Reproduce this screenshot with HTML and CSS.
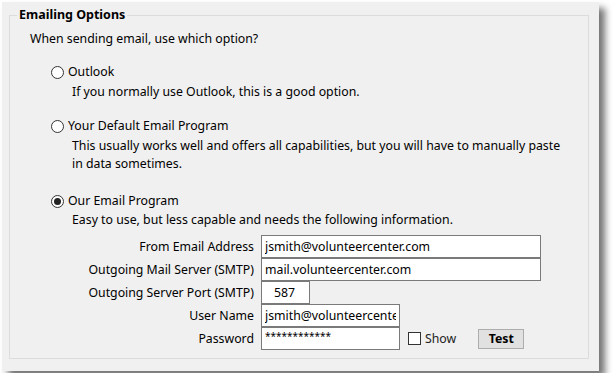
FILE: index.html
```html
<!DOCTYPE html>
<html lang="en">
<head>
    <meta charset="UTF-8">
    <title>Emailing Options</title>
    <link rel="stylesheet" href="styles.css">
</head>
<body>
    <div class="window">
        <fieldset class="group">
            <legend>Emailing Options</legend>
            <p class="prompt">When sending email, use which option?</p>

            <div class="option opt-outlook">
                <label class="radio"><span class="circle"></span>Outlook</label>
                <p class="desc">If you normally use Outlook, this is a good option.</p>
            </div>

            <div class="option opt-default">
                <label class="radio"><span class="circle"></span>Your Default Email Program</label>
                <p class="desc">This usually works well and offers all capabilities, but you will have to manually paste<br>in data sometimes.</p>
            </div>

            <div class="option opt-ours">
                <label class="radio"><span class="circle checked"></span>Our Email Program</label>
                <p class="desc">Easy to use, but less capable and needs the following information.</p>
            </div>

            <div class="settings">
                <label class="field-label">From Email Address</label>
                <div class="field"><input class="box wide" type="text" value="jsmith@volunteercenter.com"></div>

                <label class="field-label">Outgoing Mail Server (SMTP)</label>
                <div class="field"><input class="box wide" type="text" value="mail.volunteercenter.com"></div>

                <label class="field-label">Outgoing Server Port (SMTP)</label>
                <div class="field"><input class="box port" type="text" value="587"></div>

                <label class="field-label">User Name</label>
                <div class="field"><input class="box mid" type="text" value="jsmith@volunteercenter.com"></div>

                <label class="field-label">Password</label>
                <div class="field">
                    <input class="box mid pass" type="text" value="************">
                    <label class="check"><span class="checkbox"></span>Show</label>
                    <button class="test-btn" type="button">Test</button>
                </div>
            </div>
        </fieldset>
    </div>
</body>
</html>
```

FILE: styles.css
```css
* { box-sizing: border-box; }
body {
    margin: 0;
    padding: 2px;
    background: #fff;
    font-family: 'Noto Sans', 'Open Sans', sans-serif;
    font-size: 12.3px;
    color: #000;
}
.window {
    width: 597px;
    height: 369px;
    background: #f0f0f0;
    box-shadow: 6px 6px 7px rgba(0, 0, 0, 0.55);
    padding: 5px 10px 0 7px;
}
.group {
    margin: 0;
    padding: 0;
    border: 1px solid #dcdcdc;
    height: 352px;
    min-width: 0;
}
.group legend {
    margin-left: 7px;
    padding: 0 2px;
    font-weight: bold;
    font-size: 12.5px;
    line-height: 16px;
}
p { margin: 0; }
.prompt {
    margin: 7px 0 0 20px;
    line-height: 18px;
}
.option {
    margin-left: 41px;
    line-height: 18px;
}
.opt-outlook { margin-top: 15px; }
.opt-default { margin-top: 16px; }
.opt-ours { margin-top: 19px; }
.radio {
    display: flex;
    align-items: center;
    gap: 4px;
}
.circle {
    width: 13px;
    height: 13px;
    border: 1px solid #333;
    border-radius: 50%;
    background: #fff;
    position: relative;
}
.circle.checked::after {
    content: '';
    position: absolute;
    left: 2px;
    top: 2px;
    width: 7px;
    height: 7px;
    border-radius: 50%;
    background: #222;
}
.desc {
    margin: 2px 0 0 21px;
}
.opt-ours .desc { margin-top: 1px; }
.settings {
    margin-top: 6px;
    display: grid;
    grid-template-columns: 214px 1fr;
    column-gap: 7px;
    padding-left: 30px;
}
.field-label {
    text-align: right;
    line-height: 23px;
    height: 23px;
}
.field {
    display: flex;
    align-items: center;
    height: 23px;
}
.box {
    height: 23px;
    border: 1px solid #7a7a7a;
    background: #fff;
    font: inherit;
    color: #000;
    padding: 0 3px;
    margin: 0;
    outline: none;
}
.wide { width: 280px; }
.mid { width: 139px; }
.port { width: 49px; padding-left: 12px; }
.pass {
    font-size: 10px;
    padding-bottom: 5px;
}
.check {
    display: flex;
    align-items: center;
    gap: 4px;
    margin-left: 8px;
    color: #222;
}
.checkbox {
    width: 13px;
    height: 13px;
    border: 1px solid #333;
    background: #fff;
}
.test-btn {
    margin-left: 22px;
    width: 46px;
    height: 20px;
    background: #e1e1e1;
    border: 1px solid #adadad;
    font: inherit;
    font-weight: bold;
    padding: 0;
    color: #000;
}
```
